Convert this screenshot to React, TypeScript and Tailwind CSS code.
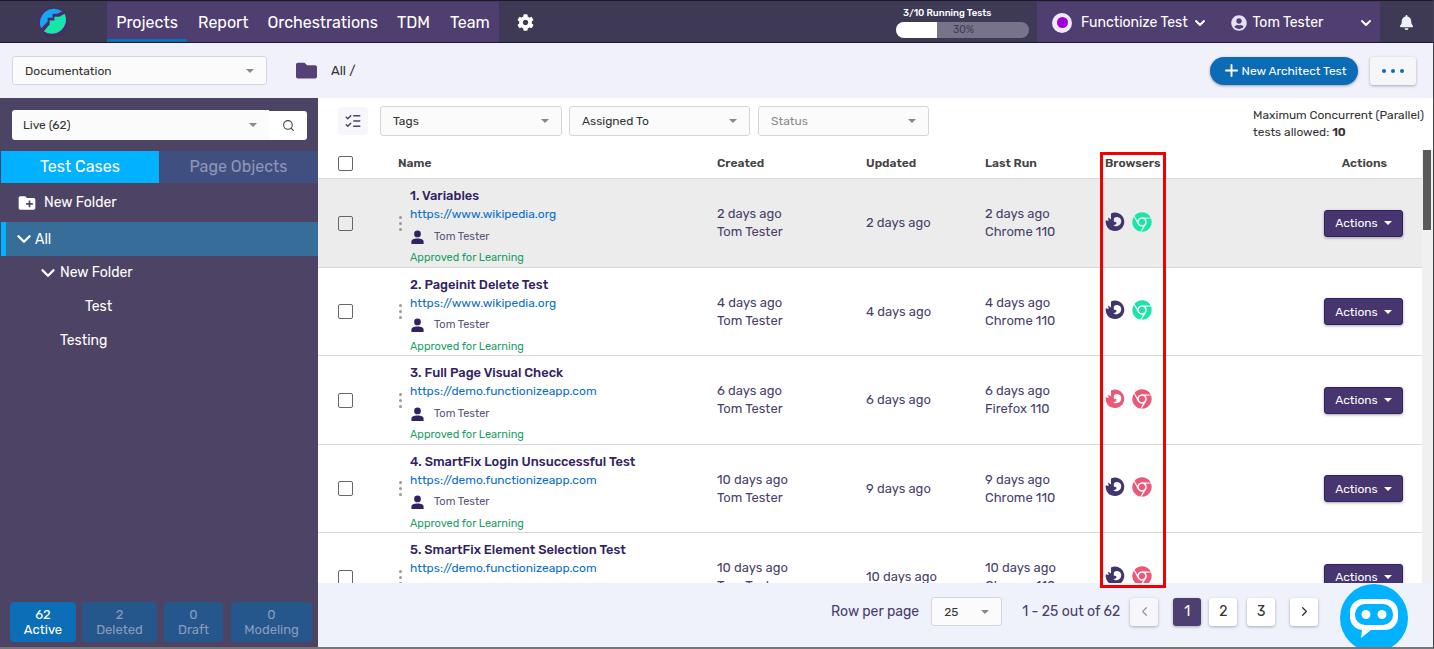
import { ChevronDown, ChevronLeft, ChevronRight, ListChecks, Plus, Search } from "lucide-react";
import { FaBell, FaChrome, FaCog, FaFolder, FaUserCircle } from "react-icons/fa";
import { MdCreateNewFolder } from "react-icons/md";

const tests = [
  { name: "1. Variables", url: "https://www.wikipedia.org", created: "2 days ago", updated: "2 days ago", run: "2 days ago", browser: "Chrome 110", ff: "text-[#43346e]", ch: "text-[#17e6a8]", bg: "bg-[#ececec]" },
  { name: "2. Pageinit Delete Test", url: "https://www.wikipedia.org", created: "4 days ago", updated: "4 days ago", run: "4 days ago", browser: "Chrome 110", ff: "text-[#43346e]", ch: "text-[#17e6a8]", bg: "bg-white" },
  { name: "3. Full Page Visual Check", url: "https://demo.functionizeapp.com", created: "6 days ago", updated: "6 days ago", run: "6 days ago", browser: "Firefox 110", ff: "text-[#ea5a78]", ch: "text-[#ea5a78]", bg: "bg-white" },
  { name: "4. SmartFix Login Unsuccessful Test", url: "https://demo.functionizeapp.com", created: "10 days ago", updated: "9 days ago", run: "9 days ago", browser: "Chrome 110", ff: "text-[#43346e]", ch: "text-[#ea5a78]", bg: "bg-white" },
  { name: "5. SmartFix Element Selection Test", url: "https://demo.functionizeapp.com", created: "10 days ago", updated: "10 days ago", run: "10 days ago", browser: "Chrome 110", ff: "text-[#43346e]", ch: "text-[#ea5a78]", bg: "bg-white" },
];

const Caret = () => (
  <span className="ml-auto h-0 w-0 border-x-[4px] border-t-[4px] border-x-transparent border-t-[#888]" />
);

const Select = ({ label, className, muted }: { label: string; className: string; muted?: boolean }) => (
  <div className={`flex items-center rounded-[3px] border border-[#d5d5de] bg-[#fbfbfb] px-3 text-[12px] ${muted ? "text-[#8a8a8a]" : "text-[#333]"} ${className}`}>
    {label}
    <Caret />
  </div>
);

const Logo = () => (
  <svg viewBox="0 0 32 32" className="h-[31px] w-[31px]">
    <circle cx="16" cy="16" r="15.5" fill="#4b2a6b" />
    <path d="M3.2 22L10 15V11H15V7H20L25 4.5A14.5 14.5 0 0 0 3.2 22z" fill="#16a6f5" />
    <path d="M6 25L12 18V14H17V10H22L27.5 7A14.5 14.5 0 0 1 6 25z" fill="#17e6a8" />
  </svg>
);

const Firefox = ({ className }: { className: string }) => (
  <svg viewBox="0 0 20 20" className={className} fill="currentColor" fillRule="evenodd">
    <path d="M6 1.4A9.3 9.3 0 1 1 .8 8.2L3.6 9 3 5.6 6 7.4zM9 6.2c2-2 6-1.5 7 1.5 1 3-1 6-4 6.5-2 .3-3-.5-4-1.5 1.5.5 3 0 3.5-1.5.3-1-1-1.5-2.5-1.5-.5-1.5 0-3 0-3.5z" />
  </svg>
);

const Person = () => (
  <svg viewBox="0 0 16 16" className="h-[15px] w-[15px] text-[#32225f]" fill="currentColor">
    <circle cx="8" cy="4.2" r="3.6" />
    <path d="M1.5 15v-2.5C1.5 10 4 9 8 9s6.5 1 6.5 3.5V15z" />
  </svg>
);

const Bot = () => (
  <svg viewBox="0 0 52 42" className="h-[42px] w-[52px]">
    <path d="M15 2h22a13 13 0 0 1 13 13v5a13 13 0 0 1-13 13H23l-10 8 1-8a13 13 0 0 1-12-13v-5A13 13 0 0 1 15 2z" fill="#fff" />
    <rect x="7" y="7" width="38" height="21" rx="10" fill="#00b2ff" />
    <circle cx="18" cy="17.5" r="4.5" fill="#fff" />
    <circle cx="34" cy="17.5" r="4.5" fill="#fff" />
  </svg>
);

const Header = () => (
  <header className="flex h-[43px] shrink-0 border-y border-y-[#1d1a2c] bg-[#3e3a56] pt-[1px] text-white">
    <div className="flex w-[107px] items-center justify-center">
      <Logo />
    </div>
    <nav className="flex w-[392px] items-center bg-[#4f3f70] pt-[2px] text-[16px]">
      <span className="flex h-full w-[80px] items-center justify-center border-b-[3px] border-[#0b6fb8] pt-[3px]">Projects</span>
      <span className="ml-[11px]">Report</span>
      <span className="ml-[19px]">Orchestrations</span>
      <span className="ml-[19px]">TDM</span>
      <span className="ml-[20px]">Team</span>
    </nav>
    <div className="flex w-[52px] items-center justify-center">
      <FaCog className="h-[17px] w-[17px]" />
    </div>
    <div className="ml-[345px] flex w-[133px] flex-col pt-[4px]">
      <span className="pl-[7px] text-[9.5px] font-medium leading-[14px]">3/10 Running Tests</span>
      <div className="mt-[2px] flex h-[16px] w-full overflow-hidden rounded-full bg-[#76738a] text-[10.5px] leading-[16px] text-[#3e3a56]">
        <div className="w-[41px] bg-white" />
        <span className="pl-[16px]">30%</span>
      </div>
    </div>
    <div className="ml-[8px] flex w-[343px] items-center bg-[#4f3f70] pt-[1px] text-[14px]">
      <span className="ml-[15px] flex h-[20px] w-[20px] items-center justify-center rounded-full bg-[#eee9fb]">
        <span className="h-[11px] w-[11px] rounded-full bg-[#a000d8]" />
      </span>
      <span className="ml-[9px]">Functionize Test</span>
      <ChevronDown className="ml-[4px] h-[16px] w-[16px]" strokeWidth={3} />
      <FaUserCircle className="ml-[23px] h-[16px] w-[16px] text-[#e6e0f5]" />
      <span className="ml-[6px]">Tom Tester</span>
      <ChevronDown className="ml-auto mr-[6px] h-[16px] w-[16px]" strokeWidth={3} />
    </div>
    <div className="flex flex-1 items-center justify-center">
      <FaBell className="h-[15px] w-[15px] text-[#eef0fb]" />
    </div>
  </header>
);

const SubBar = () => (
  <div className="flex h-[55px] shrink-0 items-center bg-[#f0f1fb] pl-[12px] pr-[17px]">
    <Select label="Documentation" className="h-[29px] w-[255px]" />
    <FaFolder className="ml-[29px] h-[21px] w-[21px] text-[#544277]" />
    <span className="ml-[14px] text-[13px] text-[#333]">All /</span>
    <button className="ml-auto flex h-[28px] w-[148px] items-center justify-center rounded-full bg-[#0b6cb5] text-[12px] text-white shadow-[0_1px_3px_rgba(0,0,0,0.35)]">
      <Plus className="mr-[1px] h-[19px] w-[19px]" strokeWidth={2.4} />
      New Architect Test
    </button>
    <button className="ml-[12px] flex h-[28px] w-[46px] items-center justify-center gap-[5px] rounded-[3px] bg-[#f6f6f8] shadow-[0_1px_3px_rgba(0,0,0,0.3)]">
      <span className="h-[4px] w-[4px] rounded-full bg-[#0b6cb5]" />
      <span className="h-[4px] w-[4px] rounded-full bg-[#0b6cb5]" />
      <span className="h-[4px] w-[4px] rounded-full bg-[#0b6cb5]" />
    </button>
  </div>
);

const Sidebar = () => (
  <aside className="relative flex w-[318px] shrink-0 flex-col bg-[#4d4465] pl-[1px] text-white">
    <div className="flex h-[53px] shrink-0 items-center pl-[11px] pr-[11px] pt-[1px]">
      <div className="flex h-[30px] w-[257px] items-center rounded-l-[3px] bg-[#fbfbfb] pl-[11px] pr-[12px] text-[12px] text-[#333]">
        Live (62)
        <Caret />
      </div>
      <div className="flex h-[29px] w-[38px] items-center justify-center rounded-r-[3px] bg-white">
        <Search className="h-[13px] w-[13px] text-[#444]" />
      </div>
    </div>
    <div className="flex h-[32px] shrink-0 pt-[1px] text-[16px]">
      <div className="-mt-[1px] flex w-[158px] items-center justify-center bg-[#00b2ff]">Test Cases</div>
      <div className="-mt-[1px] flex flex-1 items-center justify-center bg-[#3f5080] text-[#8f96b8]">Page Objects</div>
    </div>
    <div className="flex h-[39px] shrink-0 items-center pl-[16px] text-[14px]">
      <MdCreateNewFolder className="h-[20px] w-[20px]" />
      <span className="ml-[7px]">New Folder</span>
    </div>
    <div className="flex h-[34px] shrink-0 items-center border-l-[5px] border-[#00b2ff] bg-[#366e99] pl-[7px] text-[14px]">
      <ChevronDown className="h-[22px] w-[22px]" strokeWidth={2.6} />
      <span>All</span>
    </div>
    <div className="flex h-[33px] shrink-0 items-center pl-[36px] text-[14px]">
      <ChevronDown className="h-[22px] w-[22px]" strokeWidth={2.6} />
      <span className="ml-[1px]">New Folder</span>
    </div>
    <div className="flex h-[34px] shrink-0 items-center pl-[84px] text-[14px]">Test</div>
    <div className="flex h-[34px] shrink-0 items-center pl-[59px] text-[14px]">Testing</div>
    <div className="mt-auto mb-[5px] flex gap-[6px] pl-[9px] pr-[5px] text-center text-[13px] leading-[15px]">
      <div className="w-[66px] rounded-[4px] bg-[#0b6eb6] py-[5px]">62<br />Active</div>
      <div className="w-[75px] rounded-[4px] bg-[#25578c] py-[5px] text-[#8a9bbb]">2<br />Deleted</div>
      <div className="ml-[1px] w-[59px] rounded-[4px] bg-[#25578c] py-[5px] text-[#8a9bbb]">0<br />Draft</div>
      <div className="ml-[2px] w-[81px] rounded-[4px] bg-[#25578c] py-[5px] text-[#8a9bbb]">0<br />Modeling</div>
    </div>
  </aside>
);

const gridCols = "grid grid-cols-[80px_319px_149px_119px_120px_100px_1fr] items-center";

const Checkbox = () => (
  <span className="ml-[20px] block h-[15px] w-[15px] rounded-[2px] border-[1.5px] border-[#666]" />
);

const Row = ({ test }: { test: (typeof tests)[number] }) => (
  <div className={`${gridCols} h-[88.5px] border-b border-[#d8d8d8] ${test.bg} text-[13px] text-[#4a3f6b]`}>
    <Checkbox />
    <div className="flex h-full items-center">
      <div className="flex w-[12px] flex-col gap-[3px] pl-[1px]">
        <span className="h-[3px] w-[3px] rounded-full bg-[#999]" />
        <span className="h-[3px] w-[3px] rounded-full bg-[#999]" />
        <span className="h-[3px] w-[3px] rounded-full bg-[#999]" />
      </div>
      <div className="flex flex-col self-start pt-[8px]">
        <span className="text-[12.9px] font-medium leading-[18px] text-[#32225f]">{test.name}</span>
        <span className="text-[12px] leading-[18px] text-[#0b6fc9]">{test.url}</span>
        <span className="mt-[3px] flex h-[22px] items-center text-[11px] text-[#5e5480]">
          <Person />
          <span className="ml-[9px]">Tom Tester</span>
        </span>
        <span className="mt-[1px] text-[11px] leading-[18px] text-[#1e9e68]">Approved for Learning</span>
      </div>
    </div>
    <div className="leading-[18px]">{test.created}<br />Tom Tester</div>
    <div>{test.updated}</div>
    <div className="leading-[18px]">{test.run}<br />{test.browser}</div>
    <div className="mb-[3px] flex items-center gap-[7px]">
      <Firefox className={`h-[20px] w-[20px] ${test.ff}`} />
      <FaChrome className={`h-[20px] w-[20px] ${test.ch}`} />
    </div>
    <div className="flex justify-end pr-[19px]">
      <button className="flex h-[27px] w-[79px] items-center justify-center gap-[6px] rounded-[3px] border border-[#32225f] bg-[#46356f] text-[12px] text-white shadow-[0_1px_3px_rgba(0,0,0,0.35)]">
        Actions
        <span className="h-0 w-0 border-x-[4px] border-t-[4px] border-x-transparent border-t-white" />
      </button>
    </div>
  </div>
);

const PageBtn = ({ children, active, faded }: { children: React.ReactNode; active?: boolean; faded?: boolean }) => (
  <span className={`flex h-[28px] w-[28px] items-center justify-center rounded-[3px] text-[14px] shadow-[0_1px_3px_rgba(0,0,0,0.3)] ${active ? "bg-[#4f3f70] text-white" : faded ? "bg-[#f7f7fb] text-[#999]" : "bg-white text-[#333]"}`}>
    {children}
  </span>
);

const Main = () => (
  <main className="flex min-w-0 flex-1 flex-col bg-white">
    <div className="flex h-[52px] shrink-0 items-center pb-[7px] pl-[20px] pr-[9px]">
      <span className="flex h-[28px] w-[30px] items-center justify-center rounded-[4px] bg-[#f7f7fb]">
        <ListChecks className="h-[18px] w-[18px] text-[#4f3f70]" />
      </span>
      <Select label="Tags" className="ml-[12px] h-[30px] w-[182px]" />
      <Select label="Assigned To" className="ml-[7px] h-[30px] w-[181px]" />
      <Select label="Status" muted className="ml-[8px] h-[30px] w-[171px]" />
      <div className="ml-auto mt-[7px] whitespace-nowrap text-[11.9px] leading-[17px] text-[#333]">
        Maximum Concurrent (Parallel)<br />tests allowed: <b className="font-semibold">10</b>
      </div>
    </div>
    <div className="flex min-h-0 flex-1">
      <div className="flex min-w-0 flex-1 flex-col">
        <div className={`${gridCols} h-[29px] shrink-0 border-b border-[#d8d8d8] pb-[2px] text-[12px] font-semibold text-[#444]`}>
          <Checkbox />
          <span>Name</span>
          <span>Created</span>
          <span>Updated</span>
          <span>Last Run</span>
          <span>Browsers</span>
          <span className="pr-[35px] text-right">Actions</span>
        </div>
        <div className="min-h-0 flex-1 overflow-hidden">
          {tests.map((test) => <Row key={test.name} test={test} />)}
        </div>
      </div>
      <div className="w-[11px] shrink-0 bg-[#f0f0f0] pl-[1px]">
        <div className="h-[80px] w-[8px] bg-[#5a5a5a]" />
      </div>
    </div>
    <div className="flex h-[64px] shrink-0 items-center bg-[#eff1fb] pb-[7px] pl-[513px] text-[14px] text-[#4a3f6b]">
      <span>Row per page</span>
      <Select label="25" className="ml-[12px] h-[29px] w-[71px] text-[#333]" />
      <span className="ml-[20px]">1 - 25 out of 62</span>
      <span className="ml-[10px]"><PageBtn faded><ChevronLeft className="h-[15px] w-[15px]" /></PageBtn></span>
      <span className="ml-[15px]"><PageBtn active>1</PageBtn></span>
      <span className="ml-[8px]"><PageBtn>2</PageBtn></span>
      <span className="ml-[10px]"><PageBtn>3</PageBtn></span>
      <span className="ml-[15px]"><PageBtn><ChevronRight className="h-[15px] w-[15px]" /></PageBtn></span>
    </div>
  </main>
);

export default function App() {
  return (
    <div className="relative flex h-[649px] w-[1434px] flex-col overflow-hidden border-b-2 border-r border-b-[#777] border-r-[#444] font-['Rubik','Inter','Liberation_Sans',sans-serif]">
      <Header />
      <SubBar />
      <div className="flex min-h-0 flex-1">
        <Sidebar />
        <Main />
      </div>
      {/* highlight box drawn over the table */}
      <div className="pointer-events-none absolute left-[1100px] top-[152px] h-[436px] w-[66px] border-[3px] border-[#f00000]" />
      <div className="absolute left-[1340px] top-[584px] flex h-[68px] w-[68px] items-center justify-center rounded-full bg-[#00b2ff]">
        <Bot />
      </div>
    </div>
  );
}
